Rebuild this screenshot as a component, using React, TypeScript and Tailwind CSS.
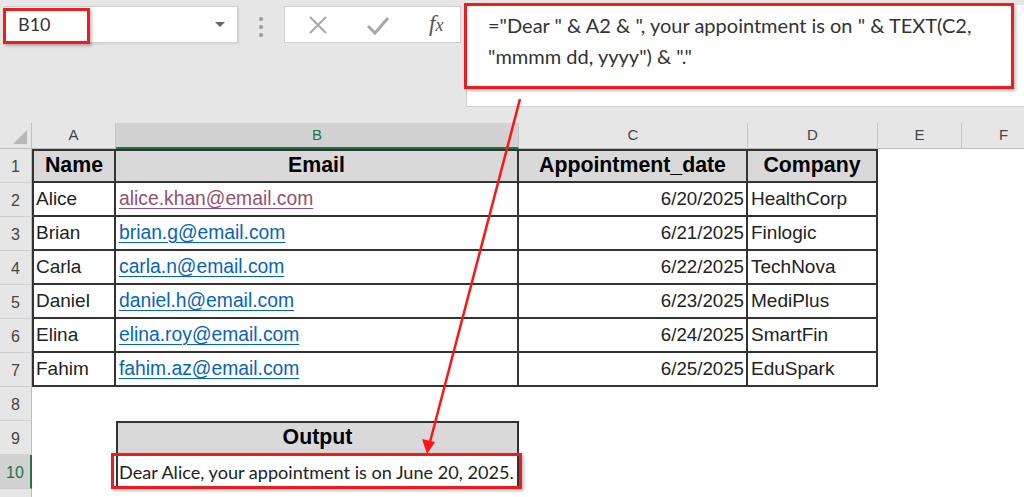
import React from "react";

const cols = ["A", "B", "C", "D", "E", "F"];

const rows = [
  { name: "Alice", email: "alice.khan@email.com", date: "6/20/2025", company: "HealthCorp", visited: true },
  { name: "Brian", email: "brian.g@email.com", date: "6/21/2025", company: "Finlogic" },
  { name: "Carla", email: "carla.n@email.com", date: "6/22/2025", company: "TechNova" },
  { name: "Daniel", email: "daniel.h@email.com", date: "6/23/2025", company: "MediPlus" },
  { name: "Elina", email: "elina.roy@email.com", date: "6/24/2025", company: "SmartFin" },
  { name: "Fahim", email: "fahim.az@email.com", date: "6/25/2025", company: "EduSpark" },
];

const calibri = "font-['Lato','Open_Sans',sans-serif]";
const arial = "font-['Liberation_Sans',Arial,sans-serif]";

function RowHead({ n, active }: { n?: number; active?: boolean }) {
  return (
    <div
      className={
        "flex items-end justify-center border-b border-[#cfcfcf] pb-[3px] text-[16px] " +
        arial +
        (active
          ? " border-r-2 border-r-[#217346] bg-[#d2d2d2] text-[#217346]"
          : " border-r border-r-[#bdbdbd] bg-[#e6e6e6] text-[#444]")
      }
    >
      {n}
    </div>
  );
}

export default function App() {
  return (
    <div className="relative h-[497px] w-[1024px] overflow-hidden bg-white">
      {/* toolbar */}
      <div className="flex h-[123px] items-start bg-[#e6e6e6] pt-[5px]">
        <div className="relative ml-[4px] mt-[1px] flex h-[37px] w-[234px] items-center justify-between border border-[#d0d0d0] bg-white pl-[13px] pr-[12px] shadow-[1px_1px_2px_rgba(0,0,0,0.08)]">
          <span className={"text-[18px] text-[#333] " + calibri}>B10</span>
          <span className="h-0 w-0 border-x-[5px] border-t-[5px] border-x-transparent border-t-[#666]" />
          <div className="absolute left-[-2px] top-[1px] h-[36px] w-[87px] border-[3px] border-[#ee1c1c] shadow-[2px_2px_3px_rgba(0,0,0,0.25)]" />
        </div>
        <div className="mx-[21px] mt-[12px] flex flex-col gap-[4px]">
          <span className="h-[4px] w-[4px] rounded-full bg-[#9a9a9a]" />
          <span className="h-[4px] w-[4px] rounded-full bg-[#9a9a9a]" />
          <span className="h-[4px] w-[4px] rounded-full bg-[#9a9a9a]" />
        </div>
        <div className="mt-[1px] flex h-[37px] w-[177px] items-center border border-[#d0d0d0] bg-white">
          <svg width="22" height="22" viewBox="0 0 22 22" className="ml-[22px]">
            <path d="M3 3 L19 19 M19 3 L3 19" stroke="#a8a8a8" strokeWidth="2" fill="none" />
          </svg>
          <svg width="26" height="22" viewBox="0 0 26 22" className="ml-[36px]">
            <path d="M3 12 L10 19 L23 4" stroke="#a8a8a8" strokeWidth="3" fill="none" />
          </svg>
          <span className="ml-[38px] font-['Liberation_Serif',serif] text-[23px] italic text-[#555]">
            f<span className="text-[18px]">x</span>
          </span>
        </div>
        <div className="relative ml-[5px] h-[102px] flex-1 border-b border-l border-[#d0d0d0] bg-white pl-[21px] pt-[5px]">
          <p className={"text-[20px] leading-[31px] text-[#333] " + calibri}>
            ="Dear " &amp; A2 &amp; ", your appointment is on " &amp; TEXT(C2,
            <br />
            "mmmm dd, yyyy") &amp; "."
          </p>
          <div className="absolute left-[-3px] top-[-2px] h-[86px] w-[550px] border-[3px] border-[#ee1c1c] shadow-[2px_2px_3px_rgba(0,0,0,0.25)]" />
        </div>
      </div>

      {/* sheet */}
      <div className="grid grid-cols-[32px_84px_403px_229px_130px_84px_84px] grid-rows-[26px_repeat(11,34px)]">
        {/* column headers */}
        <div className="relative border-b border-r border-[#bdbdbd] bg-[#e6e6e6]">
          <span className="absolute bottom-[4px] right-[4px] h-0 w-0 border-b-[14px] border-l-[14px] border-b-[#b8b8b8] border-l-transparent" />
        </div>
        {cols.map((c) => (
          <div
            key={c}
            className={
              "flex items-center justify-center border-r border-[#c6c6c6] text-[15px] " +
              arial +
              (c === "B"
                ? " border-b-2 border-b-[#217346] bg-[#d2d2d2] text-[#217346]"
                : " border-b border-b-[#bdbdbd] bg-[#e6e6e6] text-[#444]")
            }
          >
            {c}
          </div>
        ))}

        {/* row 1 headers */}
        <RowHead n={1} />
        {["Name", "Email", "Appointment_date", "Company"].map((h, i) => (
          <div
            key={h}
            className={
              "flex items-center justify-center border-y-2 border-r-2 border-[#333] bg-[#d9d9d9] text-[21.3px] font-bold text-black " +
              arial +
              (i === 0 ? " border-l-2" : "")
            }
          >
            {h}
          </div>
        ))}
        <div />
        <div />

        {rows.map((r, i) => (
          <React.Fragment key={r.name}>
            <RowHead n={i + 2} />
            <div className={"flex items-center border-b-2 border-l-2 border-r-2 border-[#333] pl-[2px] text-[19px] text-[#222] " + arial}>
              {r.name}
            </div>
            <div className={"flex items-center border-b-2 border-r-2 border-[#333] pl-[3px] text-[19.3px] " + arial}>
              <span className={"underline decoration-1 underline-offset-[3px] " + (r.visited ? "text-[#954f72]" : "text-[#0563c1]")}>
                {r.email}
              </span>
            </div>
            <div className={"flex items-center justify-end border-b-2 border-r-2 border-[#333] pr-[2px] text-[18.7px] text-[#222] " + arial}>
              {r.date}
            </div>
            <div className={"flex items-center border-b-2 border-r-2 border-[#333] pl-[3px] text-[19px] text-[#222] " + arial}>
              {r.company}
            </div>
            <div />
            <div />
          </React.Fragment>
        ))}

        {/* row 8 */}
        <RowHead n={8} />
        <div className="col-span-6" />

        {/* row 9 */}
        <RowHead n={9} />
        <div />
        <div className={"flex items-center justify-center border-2 border-[#333] bg-[#d9d9d9] text-[21.3px] font-bold text-black " + arial}>
          Output
        </div>
        <div className="col-span-4" />

        {/* row 10 */}
        <RowHead n={10} active />
        <div />
        <div className="relative flex items-center border-x-2 border-b-2 border-[#333] pl-[1px] pt-[3px]">
          <span className={"whitespace-nowrap text-[18.1px] text-[#222] " + calibri}>
            Dear Alice, your appointment is on June 20, 2025.
          </span>
          <div className="absolute left-[-7px] top-[-2px] h-[36px] w-[411px] border-[3px] border-[#ee1c1c] shadow-[2px_2px_3px_rgba(0,0,0,0.25)]" />
        </div>
        <div className="col-span-4" />

        {/* row 11 */}
        <RowHead />
        <div className="col-span-6" />
      </div>

      {/* arrow annotation */}
      <svg className="pointer-events-none absolute left-0 top-0" width="1024" height="497">
        <line x1="520" y1="99" x2="430" y2="442" stroke="#ff1414" strokeWidth="2.5" />
        <polygon points="427,454 422,439 435,442" fill="#ff1414" />
      </svg>
    </div>
  );
}
